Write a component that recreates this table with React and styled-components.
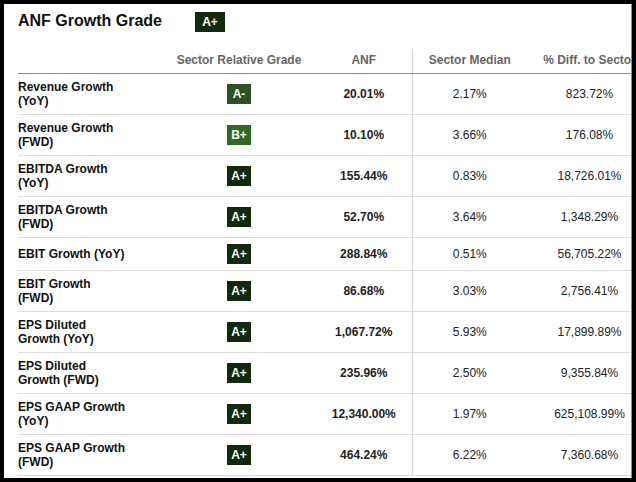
import React from "react";
import styled, { createGlobalStyle } from "styled-components";

const Global = createGlobalStyle`
  html, body { margin: 0; padding: 0; background: #000; }
  body { font-family: "Liberation Sans", Arial, sans-serif; }
`;

const Panel = styled.div`
  box-sizing: border-box;
  margin: 4px 0 0 4px;
  width: 628px;
  height: 474px;
  background: #fff;
  border-right: 1px solid #8c8c8c;
  padding: 8px 0 0 14px;
  overflow: hidden;
`;

const TitleRow = styled.div`
  display: flex;
  align-items: flex-start;
  gap: 33px;
  height: 20px;
`;

const Title = styled.h2`
  margin: 0;
  font-size: 16px;
  line-height: 18px;
  font-weight: 700;
  color: #111;
`;

const Badge = styled.span`
  display: inline-flex;
  align-items: center;
  justify-content: center;
  width: ${(p) => (p.$wide ? 30 : 24)}px;
  height: 20px;
  background: ${(p) => p.$bg};
  color: #fff;
  font-size: 12px;
  font-weight: 700;
  line-height: 20px;
  vertical-align: middle;
`;

const Table = styled.table`
  margin-top: 17px;
  width: 634px;
  table-layout: fixed;
  border-collapse: collapse;
  font-size: 12px;
  line-height: 14px;
`;

const Th = styled.th`
  padding: 4px 0 6px;
  font-weight: 700;
  color: #666;
  text-align: center;
  white-space: nowrap;
  border-bottom: 1px solid #8a8a8a;
  border-left: ${(p) => (p.$divider ? "1px solid #d6d6d6" : "none")};
`;

const Row = styled.tr`
  border-bottom: 1px solid #dcdcdc;
`;

const Label = styled.td`
  padding: 6px 34px 6px 0;
  text-align: left;
  font-weight: 700;
  color: #111;
  vertical-align: middle;
`;

const Cell = styled.td`
  padding: 6px 0;
  text-align: center;
  vertical-align: middle;
  white-space: nowrap;
  color: #222;
  font-weight: ${(p) => (p.$bold ? 700 : 400)};
  border-left: ${(p) => (p.$divider ? "1px solid #d6d6d6" : "none")};
`;

const gradeColors = {
  "A+": "#112a0d",
  "A-": "#2a5224",
  "B+": "#2d6b22",
};

const rows = [
  ["Revenue Growth (YoY)", "A-", "20.01%", "2.17%", "823.72%"],
  ["Revenue Growth (FWD)", "B+", "10.10%", "3.66%", "176.08%"],
  ["EBITDA Growth (YoY)", "A+", "155.44%", "0.83%", "18,726.01%"],
  ["EBITDA Growth (FWD)", "A+", "52.70%", "3.64%", "1,348.29%"],
  ["EBIT Growth (YoY)", "A+", "288.84%", "0.51%", "56,705.22%"],
  ["EBIT Growth (FWD)", "A+", "86.68%", "3.03%", "2,756.41%"],
  ["EPS Diluted Growth (YoY)", "A+", "1,067.72%", "5.93%", "17,899.89%"],
  ["EPS Diluted Growth (FWD)", "A+", "235.96%", "2.50%", "9,355.84%"],
  ["EPS GAAP Growth (YoY)", "A+", "12,340.00%", "1.97%", "625,108.99%"],
  ["EPS GAAP Growth (FWD)", "A+", "464.24%", "6.22%", "7,360.68%"],
];

export default function App() {
  return (
    <>
      <Global />
      <Panel>
        <TitleRow>
          <Title>ANF Growth Grade</Title>
          <Badge $wide $bg={gradeColors["A+"]}>A+</Badge>
        </TitleRow>
        <Table>
          <colgroup>
            <col style={{ width: 144 }} />
            <col style={{ width: 154 }} />
            <col style={{ width: 96 }} />
            <col style={{ width: 115 }} />
            <col style={{ width: 125 }} />
          </colgroup>
          <thead>
            <tr>
              <Th />
              <Th>Sector Relative Grade</Th>
              <Th>ANF</Th>
              <Th $divider>Sector Median</Th>
              <Th>% Diff. to Sector</Th>
            </tr>
          </thead>
          <tbody>
            {rows.map(([label, grade, anf, med, diff]) => (
              <Row key={label}>
                <Label>{label}</Label>
                <Cell>
                  <Badge $bg={gradeColors[grade]}>{grade}</Badge>
                </Cell>
                <Cell $bold>{anf}</Cell>
                <Cell $divider>{med}</Cell>
                <Cell>{diff}</Cell>
              </Row>
            ))}
          </tbody>
        </Table>
      </Panel>
    </>
  );
}
